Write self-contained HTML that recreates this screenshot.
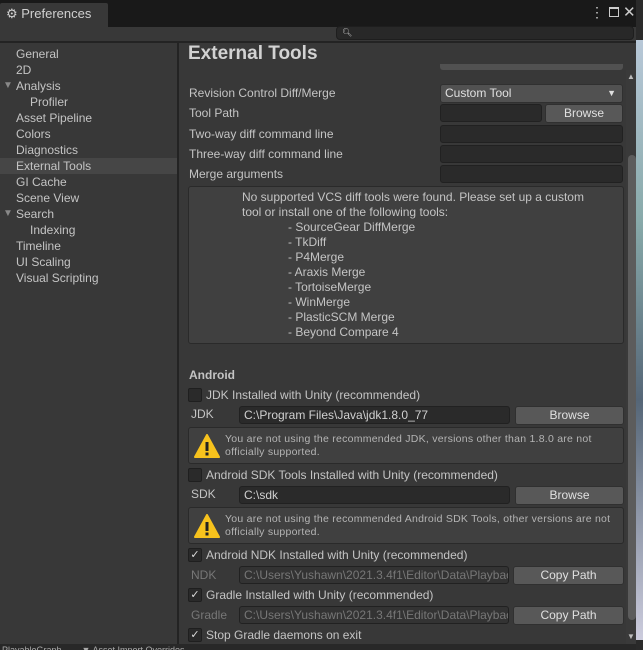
<!DOCTYPE html>
<html><head><meta charset="utf-8"><style>
*{box-sizing:border-box;margin:0;padding:0}
body{width:643px;height:650px;overflow:hidden;background:#383838;font-family:"Liberation Sans",sans-serif;font-size:12px;color:#c4c4c4;position:relative}
.a{position:absolute;white-space:nowrap}
.f{position:absolute;background:#2a2a2a;border:1px solid #212121;border-radius:3px;height:18px;padding-left:4px;line-height:16px}
.b{position:absolute;background:#585858;border:1px solid #303030;border-radius:3px;height:19px;text-align:center;line-height:17px;color:#e0e0e0}
.cb{position:absolute;width:14px;height:14px;background:#2a2a2a;border:1px solid #1f1f1f;border-radius:2px;color:#ddd;font-size:11px;line-height:12px;text-align:center}
.hb{position:absolute;background:#404040;border:1px solid #2a2a2a;border-radius:3px}
.warn{position:absolute;left:5px;top:6px}
.wt{position:absolute;left:36px;top:5px;font-size:10.5px;line-height:13px;color:#b4b4b4;white-space:normal;width:392px;letter-spacing:0.25px}
.side div{height:16px;line-height:16px;padding-left:16px}
</style></head><body>
<div class="a" style="left:0;top:0;width:643px;height:27px;background:#191919"></div>
<div class="a" style="left:0;top:3px;width:108px;height:24px;background:#383838;border-radius:2px 2px 0 0"></div>
<div class="a" style="left:6px;top:6px;font-size:13px;color:#d0d0d0">⚙ Preferences</div>
<div class="a" style="left:590px;top:4px;font-size:14px;color:#ccc">⋮</div>
<div class="a" style="left:609px;top:7px;width:10px;height:10px;border:1px solid #ccc;border-top-width:2px"></div>
<div class="a" style="left:623px;top:3px;font-size:15px;color:#ccc">✕</div>
<div class="a" style="left:0;top:27px;width:636px;height:15px;background:#383838"></div>
<div class="a" style="left:336px;top:26px;width:298px;height:14px;background:#282828;border:1px solid #1e1e1e;border-radius:4px;font-size:8px;padding-left:5px;line-height:12px">🔍︎</div>
<div class="a" style="left:0;top:41px;width:636px;height:2px;background:#232323"></div>
<div class="a" style="left:636px;top:0;width:7px;height:650px;background:#2a2a2a"></div>
<div class="a" style="left:636px;top:40px;width:7px;height:600px;background:linear-gradient(#b8c8d8,#8aa 30%,#567 60%,#ccd)"></div>
<div class="a" style="left:177px;top:43px;width:2px;height:607px;background:#232323"></div>
<div class="a side" style="left:0;top:46px;width:177px">
<div>General</div><div>2D</div><div><span style="position:absolute;left:3px;color:#888;font-size:10px">▼</span>Analysis</div><div style="padding-left:30px">Profiler</div><div>Asset Pipeline</div><div>Colors</div><div>Diagnostics</div><div style="background:#464646">External Tools</div><div>GI Cache</div><div>Scene View</div><div><span style="position:absolute;left:3px;color:#888;font-size:10px">▼</span>Search</div><div style="padding-left:30px">Indexing</div><div>Timeline</div><div>UI Scaling</div><div>Visual Scripting</div>
</div>
<div class="a" style="left:188px;top:43px;font-size:19px;font-weight:bold;color:#d2d2d2">External Tools</div>
<div class="a" style="left:440px;top:64px;width:183px;height:6px;background:#515151;border-radius:0 0 3px 3px"></div>
<div class="a" style="left:189px;top:86px">Revision Control Diff/Merge</div>
<div class="b" style="left:440px;top:84px;width:183px;text-align:left;padding-left:4px;background:#515151">Custom Tool<span style="position:absolute;right:6px;font-size:9px">▼</span></div>
<div class="a" style="left:189px;top:106px">Tool Path</div>
<div class="f" style="left:440px;top:104px;width:102px"></div>
<div class="b" style="left:545px;top:104px;width:78px">Browse</div>
<div class="a" style="left:189px;top:127px">Two-way diff command line</div>
<div class="f" style="left:440px;top:125px;width:183px"></div>
<div class="a" style="left:189px;top:147px">Three-way diff command line</div>
<div class="f" style="left:440px;top:145px;width:183px"></div>
<div class="a" style="left:189px;top:167px">Merge arguments</div>
<div class="f" style="left:440px;top:165px;width:183px"></div>
<div class="hb" style="left:188px;top:186px;width:436px;height:158px"></div>
<div class="a" style="left:242px;top:190px;line-height:15px">No supported VCS diff tools were found. Please set up a custom<br>tool or install one of the following tools:<br>
<span style="padding-left:46px">- SourceGear DiffMerge</span><br><span style="padding-left:46px">- TkDiff</span><br><span style="padding-left:46px">- P4Merge</span><br><span style="padding-left:46px">- Araxis Merge</span><br><span style="padding-left:46px">- TortoiseMerge</span><br><span style="padding-left:46px">- WinMerge</span><br><span style="padding-left:46px">- PlasticSCM Merge</span><br><span style="padding-left:46px">- Beyond Compare 4</span></div>
<div class="a" style="left:189px;top:368px;font-weight:bold">Android</div>
<div class="cb" style="left:188px;top:388px"></div>
<div class="a" style="left:206px;top:388px">JDK Installed with Unity (recommended)</div>
<div class="a" style="left:191px;top:407px">JDK</div>
<div class="f" style="left:239px;top:406px;width:271px;color:#d0d0d0">C:\Program Files\Java\jdk1.8.0_77</div>
<div class="b" style="left:515px;top:406px;width:109px">Browse</div>
<div class="hb" style="left:188px;top:427px;width:436px;height:37px">
<svg class="warn" width="26" height="24" viewBox="0 0 26 24"><path d="M13 1 L25 23 L1 23 Z" fill="#f7c21d" stroke="#f7c21d" stroke-linejoin="round" stroke-width="2"/><rect x="11.5" y="8" width="3" height="9" fill="#222"/><rect x="11.5" y="18.5" width="3" height="3" fill="#222"/></svg>
<div class="wt">You are not using the recommended JDK, versions other than 1.8.0 are not officially supported.</div></div>
<div class="cb" style="left:188px;top:468px"></div>
<div class="a" style="left:206px;top:468px">Android SDK Tools Installed with Unity (recommended)</div>
<div class="a" style="left:191px;top:487px">SDK</div>
<div class="f" style="left:239px;top:486px;width:271px;color:#d0d0d0">C:\sdk</div>
<div class="b" style="left:515px;top:486px;width:109px">Browse</div>
<div class="hb" style="left:188px;top:507px;width:436px;height:37px">
<svg class="warn" width="26" height="24" viewBox="0 0 26 24"><path d="M13 1 L25 23 L1 23 Z" fill="#f7c21d" stroke="#f7c21d" stroke-linejoin="round" stroke-width="2"/><rect x="11.5" y="8" width="3" height="9" fill="#222"/><rect x="11.5" y="18.5" width="3" height="3" fill="#222"/></svg>
<div class="wt">You are not using the recommended Android SDK Tools, other versions are not officially supported.</div></div>
<div class="cb" style="left:188px;top:548px">✓</div>
<div class="a" style="left:206px;top:548px">Android NDK Installed with Unity (recommended)</div>
<div class="a" style="left:191px;top:568px;color:#777">NDK</div>
<div class="f" style="left:239px;top:566px;width:270px;color:#777;background:#333;overflow:hidden">C:\Users\Yushawn\2021.3.4f1\Editor\Data\PlaybackEngines</div>
<div class="b" style="left:513px;top:566px;width:111px">Copy Path</div>
<div class="cb" style="left:188px;top:588px">✓</div>
<div class="a" style="left:206px;top:588px">Gradle Installed with Unity (recommended)</div>
<div class="a" style="left:191px;top:608px;color:#777">Gradle</div>
<div class="f" style="left:239px;top:606px;width:270px;color:#777;background:#333;overflow:hidden">C:\Users\Yushawn\2021.3.4f1\Editor\Data\PlaybackEngines</div>
<div class="b" style="left:513px;top:606px;width:111px">Copy Path</div>
<div class="cb" style="left:188px;top:628px">✓</div>
<div class="a" style="left:206px;top:628px">Stop Gradle daemons on exit</div>
<div class="a" style="left:626px;top:70px;width:10px;height:575px;background:#3a3a3a"></div>
<div class="a" style="left:627px;top:72px;font-size:8px;color:#bbb">▲</div>
<div class="a" style="left:628px;top:155px;width:8px;height:465px;background:#5c5c5c;border-radius:4px"></div>
<div class="a" style="left:627px;top:632px;font-size:8px;color:#bbb">▼</div>
<div class="a" style="left:0;top:644px;width:636px;height:6px;background:#282828;font-size:9px;line-height:12px;color:#aaa;overflow:hidden;padding-left:2px">PlayableGraph &nbsp;&nbsp;&nbsp;&nbsp;&nbsp;&nbsp; ▼ Asset Import Overrides</div>
</body></html>
